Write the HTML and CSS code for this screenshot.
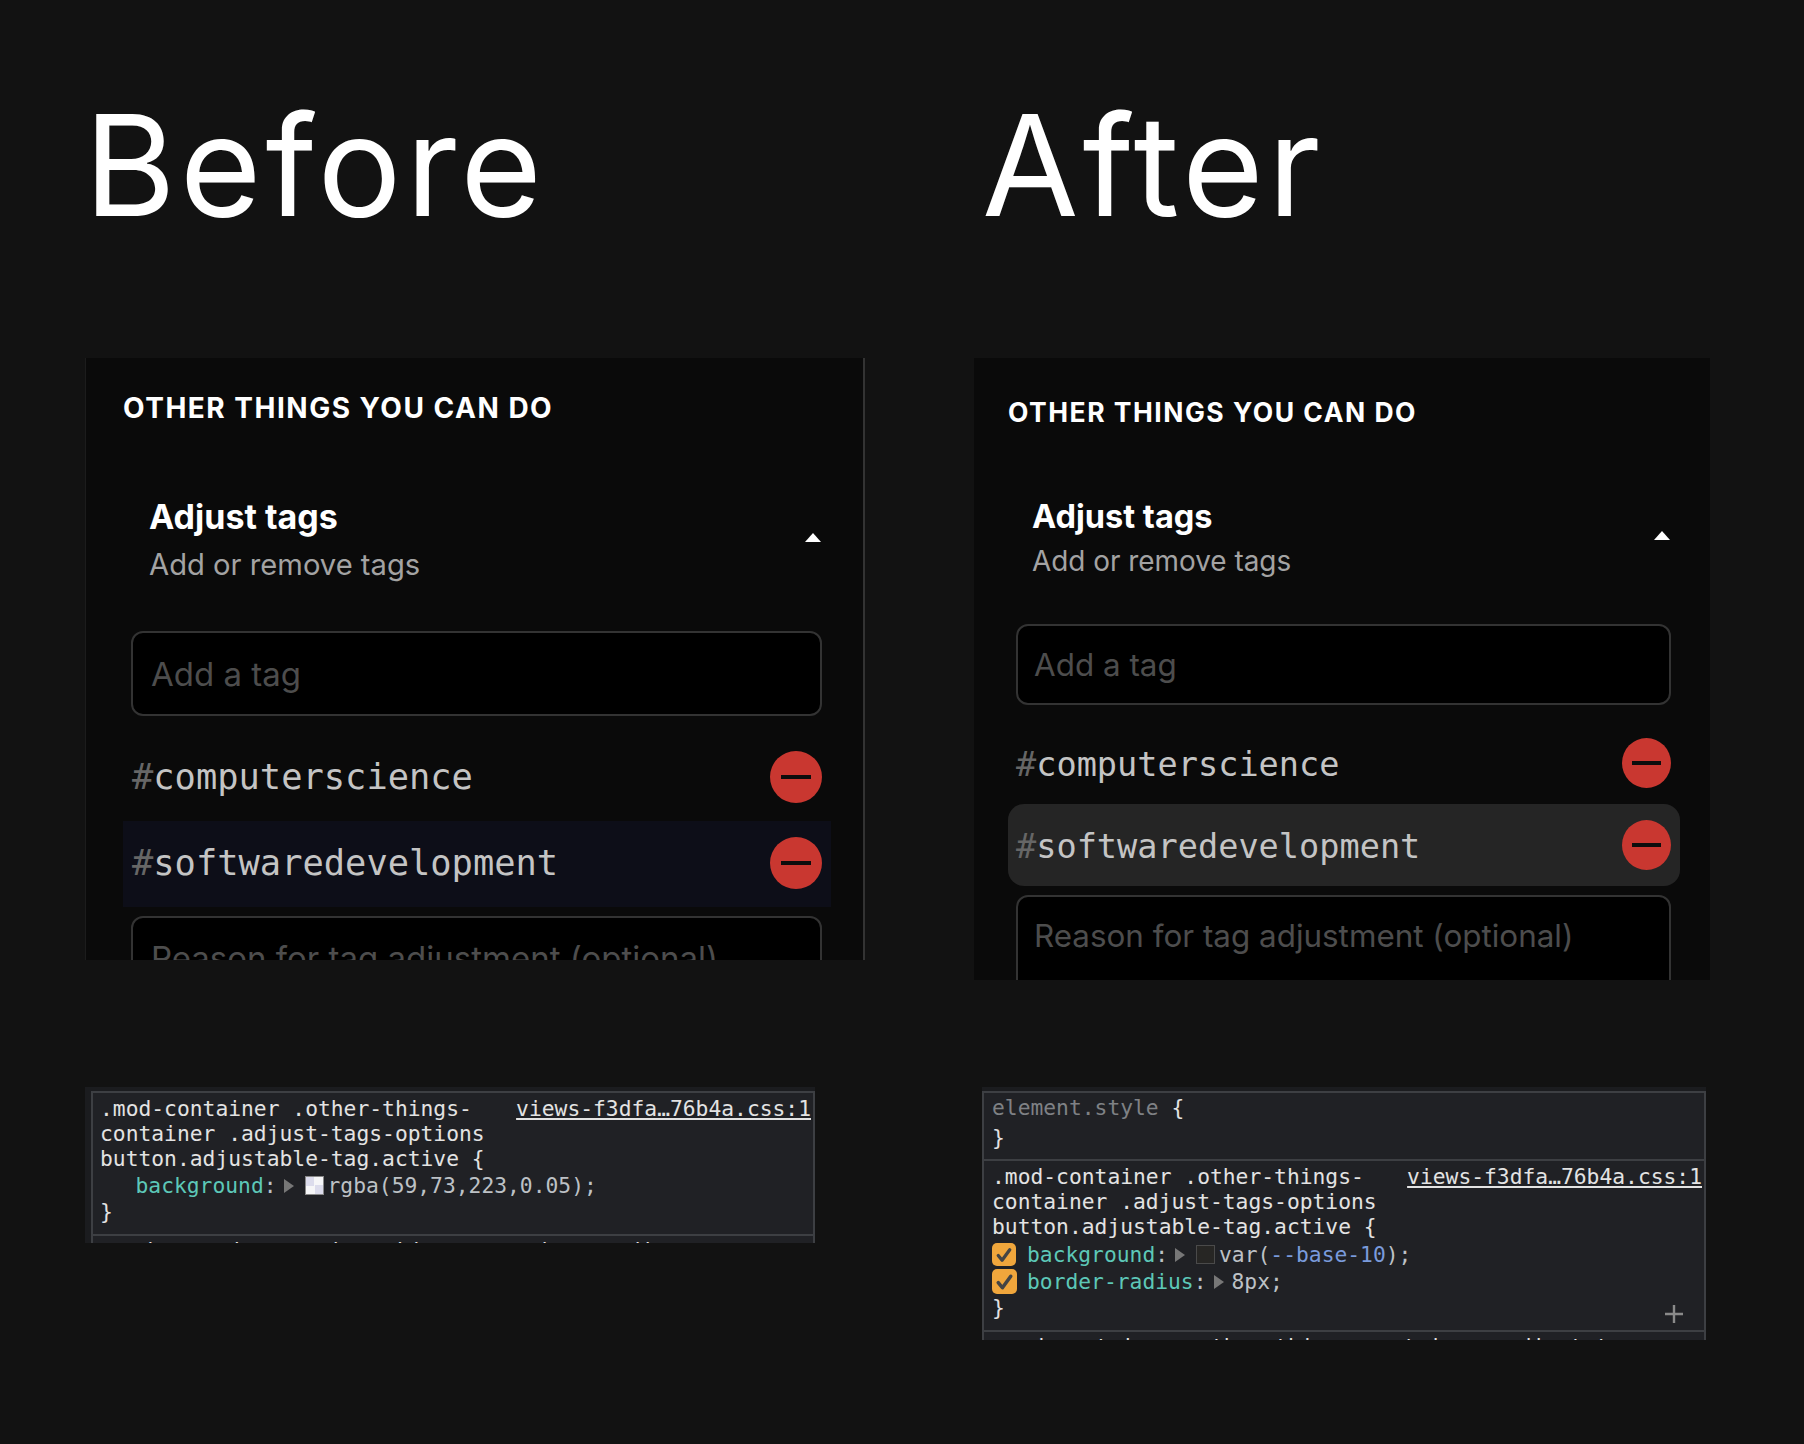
FILE: index.html
```
<!DOCTYPE html>
<html lang="en">
<head>
<meta charset="utf-8">
<title>Before and After</title>
<link rel="stylesheet" href="styles.css">
</head>
<body>
<main class="page">
  <section class="col col-before">
    <h1 class="title">Before</h1>
    <div class="panel">
      <h2 class="heading">OTHER THINGS YOU CAN DO</h2>
      <div class="adjust">
        <div>
          <div class="adjust-title">Adjust tags</div>
          <div class="adjust-sub">Add or remove tags</div>
        </div>
        <svg class="chevron" viewBox="0 0 16 9"><path d="M8 0L16 9H0Z" fill="#fff"/></svg>
      </div>
      <div class="field">Add a tag</div>
      <div class="tag"><span class="tag-name"><span class="hash">#</span>computerscience</span><span class="remove"><span class="bar"></span></span></div>
      <div class="tag tag-active"><span class="tag-name"><span class="hash">#</span>softwaredevelopment</span><span class="remove"><span class="bar"></span></span></div>
      <div class="field field-reason">Reason for tag adjustment (optional)</div>
    </div>
    <div class="devtools">
      <div class="dev-body">
        <div class="rule rule-last">
          <div class="rule-head">
            <div class="sel">.mod-container .other-things-<br>container .adjust-tags-options<br>button.adjustable-tag.active {</div>
            <a class="src">views-f3dfa…76b4a.css:1</a>
          </div>
          <div class="decl decl-indent"><span class="prop">background</span><span class="val">:</span><span class="tri"></span><span class="swatch swatch-check"></span><span class="val">rgba(59,73,223,0.05);</span></div>
          <div class="line">}</div>
        </div>
        <div class="cut">.mod-container .other-things-container .adjust-tags</div>
      </div>
    </div>
  </section>

  <section class="col col-after">
    <h1 class="title">After</h1>
    <div class="panel">
      <h2 class="heading">OTHER THINGS YOU CAN DO</h2>
      <div class="adjust">
        <div>
          <div class="adjust-title">Adjust tags</div>
          <div class="adjust-sub">Add or remove tags</div>
        </div>
        <svg class="chevron" viewBox="0 0 16 9"><path d="M8 0L16 9H0Z" fill="#fff"/></svg>
      </div>
      <div class="field">Add a tag</div>
      <div class="tag"><span class="tag-name"><span class="hash">#</span>computerscience</span><span class="remove"><span class="bar"></span></span></div>
      <div class="tag tag-active"><span class="tag-name"><span class="hash">#</span>softwaredevelopment</span><span class="remove"><span class="bar"></span></span></div>
      <div class="field field-reason">Reason for tag adjustment (optional)</div>
    </div>
    <div class="devtools">
      <div class="dev-body">
        <div class="rule rule-element">
          <div class="line"><span class="dim">element.style</span> {</div>
          <div class="line line-close">}</div>
        </div>
        <div class="rule rule-last">
          <div class="rule-head">
            <div class="sel">.mod-container .other-things-<br>container .adjust-tags-options<br>button.adjustable-tag.active {</div>
            <a class="src">views-f3dfa…76b4a.css:1</a>
          </div>
          <div class="decl decl-first"><span class="check"><svg viewBox="0 0 24 24"><path d="M6 13l4 5 8-11" fill="none" stroke="#444" stroke-width="3.4" stroke-linecap="round" stroke-linejoin="round"/></svg></span><span class="prop">background</span><span class="val">:</span><span class="tri"></span><span class="swatch swatch-dark"></span><span class="val">var(<span class="var">--base-10</span>);</span></div>
          <div class="decl"><span class="check check-tall"><svg viewBox="0 0 24 24"><path d="M6 13l4 5 8-11" fill="none" stroke="#444" stroke-width="3.4" stroke-linecap="round" stroke-linejoin="round"/></svg></span><span class="prop">border-radius</span><span class="val">:</span><span class="tri tri-tight"></span><span class="val">8px;</span></div>
          <div class="line line-end"><span>}</span><svg class="plus" viewBox="0 0 20 20"><path d="M10 1v18M1 10h18" stroke="#8a8a8a" stroke-width="2.4" fill="none"/></svg></div>
        </div>
        <div class="cut">.mod-container .other-things-container .adjust-tags</div>
      </div>
    </div>
  </section>
</main>
</body>
</html>
```
FILE: styles.css
```
* { box-sizing: border-box; }
html, body { margin: 0; padding: 0; }
body { background: #121212; color: #fff; width: 1804px; height: 1444px; overflow: hidden; font-family: "Inter", "Liberation Sans", sans-serif; }
.page { display: flex; height: 1444px; }
.col { display: flex; flex-direction: column; align-items: flex-start; }
.col-before { width: 974px; padding-left: 85px; }
.col-after { width: 830px; }

.title { margin: 0; font-weight: 400; font-size: 140px; line-height: 170px; padding-top: 80px; height: 358px; color: #fff; }
.col-before .title { margin-left: -1px; letter-spacing: 4.2px; }
.col-after .title { padding-left: 8px; letter-spacing: 4px; }

.panel { background: #0a0a0a; overflow: hidden; }
.col-before .panel { width: 780px; height: 602px; padding: 32px 0 0 37px; border-right: 2px solid #333; border-left: 1px solid #1c1c1c; }
.col-after .panel { width: 736px; height: 622px; padding: 36px 0 0 34px; }

.heading { margin: 0; font-weight: 700; color: #fff; letter-spacing: 1.5px; }
.col-before .heading { font-size: 28px; line-height: 36px; }
.col-after .heading { font-size: 26.5px; line-height: 36px; }

.adjust { display: flex; justify-content: space-between; align-items: center; }
.adjust-title { font-weight: 700; color: #fff; }
.adjust-sub { color: #a3a3a3; }
.chevron { display: block; width: 16px; height: 9px; }
.col-before .chevron { margin-bottom: 10px; }
.col-after .chevron { margin-bottom: 9px; }
.col-before .adjust { margin: 70px 0 0 26px; width: 672px; }
.col-after .adjust { margin: 66px 0 0 24px; width: 638px; }
.col-before .adjust-title { font-size: 34px; line-height: 42px; }
.col-before .adjust-sub { font-size: 29.2px; line-height: 48px; margin-top: 3px; }
.col-after .adjust-title { font-size: 32.5px; line-height: 42px; }
.col-after .adjust-sub { font-size: 27.9px; line-height: 46px; }

.field { background: #000; border: 2px solid #333; color: #4d4d4d; display: flex; align-items: center; white-space: nowrap; }
.col-before .field { width: 691px; height: 85px; margin: 42px 0 0 8px; padding-left: 18px; border-radius: 12px; font-size: 33px; }
.col-after .field { width: 655px; height: 81px; margin: 40px 0 0 8px; padding-left: 16px; border-radius: 12px; font-size: 31.4px; }
.col-before .field-reason { height: 120px; margin-top: 9px; align-items: flex-start; padding-top: 20px; }
.col-after .field-reason { height: 120px; margin-top: 9px; align-items: flex-start; padding-top: 20px; }

.tag { display: flex; justify-content: space-between; align-items: center; font-family: "DejaVu Sans Mono", monospace; color: #c4c4c4; }
.hash { color: #666; }
.col-before .tag { width: 708px; height: 86px; padding: 0 9px 0 9px; margin-top: 19px; font-size: 35.4px; }
.col-before .tag-active { margin-top: 0; background: #0d0e18; }
.col-before .tag-name { padding-bottom: 3px; }
.col-after .tag { width: 672px; height: 82px; padding: 0 9px 0 8px; margin-top: 17px; font-size: 33.6px; }
.col-after .tag-active { margin-top: 0; background: #252525; border-radius: 16px; }
.col-after .tag-name { padding-top: 3px; }

.remove { background: #c93730; border-radius: 50%; display: flex; align-items: center; justify-content: center; flex: none; }
.bar { display: block; background: #0d0d0d; height: 4px; }
.col-before .remove { width: 52px; height: 52px; margin-bottom: 2px; }
.col-before .bar { width: 30px; }
.col-after .remove { width: 49px; height: 50px; }
.col-after .bar { width: 29px; }

.devtools { background: #1b1c1f; font-family: "DejaVu Sans Mono", monospace; font-size: 21.3px; line-height: 25px; color: #e3e3e3; overflow: hidden; padding-top: 4px; }
.col-before .devtools { width: 730px; height: 156px; margin-top: 127px; padding-left: 6px; }
.col-after .devtools { width: 724px; height: 253px; margin-top: 107px; margin-left: 8px; }
.dev-body { height: 100%; background: #202125; border-top: 2px solid #3d3f43; border-left: 2px solid #3d3f43; border-right: 2px solid #3d3f43; overflow: hidden; }

.rule { border-bottom: 2px solid #3d3f43; }
.col-before .rule { padding: 3px 2px 6px 7px; height: 143px; }
.col-after .rule { padding-left: 8px; padding-right: 2px; }
.rule-element { height: 68px; padding-top: 2px; }
.line-close { margin-top: 5px; }
.col-after .rule-last { height: 171px; padding-top: 3px; }
.rule-head { display: flex; justify-content: space-between; }
.src { text-decoration: underline; }
.decl { display: flex; align-items: center; height: 25px; margin-top: 2px; }
.decl-first { margin-top: 3px; }
.decl-indent { padding-left: 35.5px; margin-top: 2px; margin-bottom: 1px; }
.prop { color: #5dc8b8; }
.val { color: #bdc1c6; }
.var { color: #7a9bdc; }
.dim { color: #7f8185; }
.tri { width: 0; height: 0; border-left: 10px solid #777; border-top: 7px solid transparent; border-bottom: 7px solid transparent; margin: 0 11px 0 7px; }
.tri-tight { margin-right: 8px; }
.swatch { width: 19px; height: 19px; margin-right: 4px; flex: none; }
.swatch-check { background: conic-gradient(#f6f6f8 0 25%, #dcdcec 0 50%, #f6f6f8 0 75%, #dcdcec 0); border: 1px solid #888; }
.swatch-dark { background: #272624; border: 1px solid #4a4a4a; }
.check { width: 24px; height: 23px; margin-right: 11px; background: #f0a63c; border-radius: 5px; flex: none; display: flex; }
.check-tall { width: 25px; height: 25px; margin-right: 10px; }
.check svg { width: 100%; height: 100%; }
.line-end { display: flex; justify-content: space-between; align-items: center; height: 25px; margin-top: 1px; padding-right: 18px; }
.plus { width: 20px; height: 20px; display: block; margin-top: 12px; }
.cut { white-space: nowrap; padding-left: 9px; margin-top: 2px; }
```
